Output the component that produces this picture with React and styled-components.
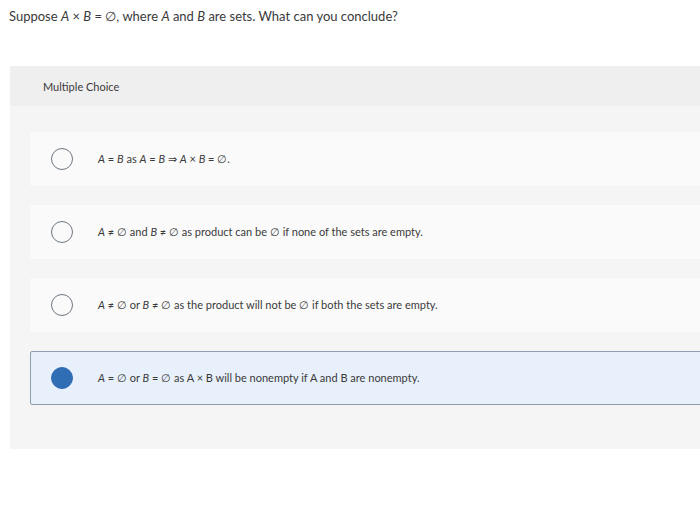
import React, { useState } from 'react';
import styled, { createGlobalStyle } from 'styled-components';

const GlobalStyle = createGlobalStyle`
	html, body {
		margin: 0;
		padding: 0;
		background: #ffffff;
		overflow: hidden;
	}
	body {
		font-family: Lato, 'Open Sans', 'Liberation Sans', sans-serif;
		color: #3a3a3a;
	}
`;

const Page = styled.div`
	width: 700px;
	height: 505px;
	overflow: hidden;
`;

const Question = styled.p`
	margin: 0;
	padding: 8px 0 0 9px;
	font-size: 13px;
	line-height: 17px;
	color: #3a3a3a;
	i {
		font-style: italic;
	}
`;

const Panel = styled.section`
	margin: 41px 0 0 10px;
	width: 720px;
	background: #f5f5f5;
	padding-bottom: 44px;
`;

const PanelHeader = styled.div`
	height: 40px;
	background: #efefef;
	display: flex;
	align-items: center;
	padding-left: 33px;
	font-size: 11px;
	color: #3a3a3a;
`;

const Options = styled.div`
	display: flex;
	flex-direction: column;
	gap: 19px;
	padding: 26px 0 0 20px;
`;

const Option = styled.label`
	height: 54px;
	box-sizing: border-box;
	display: flex;
	align-items: center;
	gap: 25px;
	padding-left: ${props => (props.selected ? '20px' : '21px')};
	background: ${props => (props.selected ? '#e8f0fb' : '#fafafa')};
	border: ${props => (props.selected ? '1px solid #8e9db0' : 'none')};
	border-radius: 2px;
	cursor: pointer;
	font-size: 11px;
	color: #3a3a3a;
`;

const Radio = styled.span`
	width: 22px;
	height: 22px;
	box-sizing: border-box;
	border-radius: 50%;
	flex: 0 0 auto;
	border: 1.5px solid ${props => (props.selected ? '#2f6db5' : '#6f7782')};
	background: ${props => (props.selected ? '#2f6db5' : 'transparent')};
`;

const Text = styled.span`
	i {
		font-style: italic;
	}
`;

const choices = [
	<>
		<i>A</i> = <i>B</i> as <i>A</i> = <i>B</i> ⇒ <i>A</i> × <i>B</i> = ∅.
	</>,
	<>
		<i>A</i> ≠ ∅ and <i>B</i> ≠ ∅ as product can be ∅ if none of the sets are empty.
	</>,
	<>
		<i>A</i> ≠ ∅ or <i>B</i> ≠ ∅ as the product will not be ∅ if both the sets are empty.
	</>,
	<>
		<i>A</i> = ∅ or <i>B</i> = ∅ as A × B will be nonempty if A and B are nonempty.
	</>,
];

const App = () => {
	const [picked, setPicked] = useState(3);

	return (
		<Page>
			<GlobalStyle />
			<Question>
				Suppose <i>A</i> × <i>B</i> = ∅, where <i>A</i> and <i>B</i> are sets. What can you conclude?
			</Question>
			<Panel>
				<PanelHeader>Multiple Choice</PanelHeader>
				<Options>
					{choices.map((c, i) => (
						<Option key={i} selected={picked === i} onClick={() => setPicked(i)}>
							<Radio selected={picked === i} />
							<Text>{c}</Text>
						</Option>
					))}
				</Options>
			</Panel>
		</Page>
	);
};

export default App;
